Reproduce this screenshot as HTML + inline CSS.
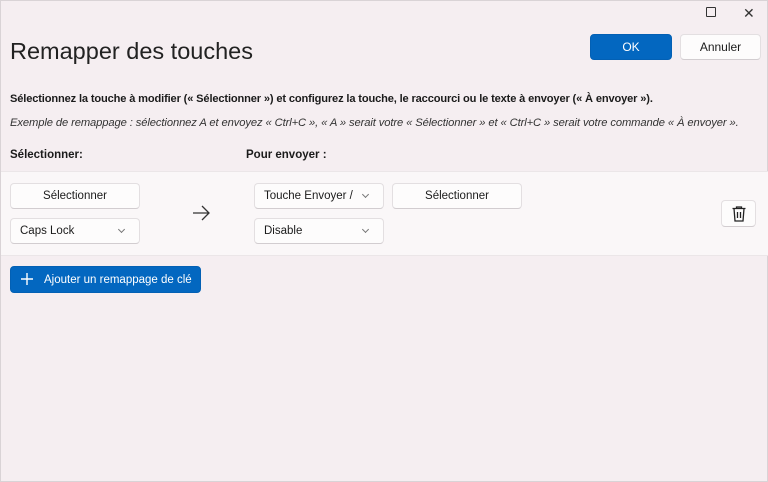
<!DOCTYPE html>
<html><head><meta charset="utf-8"><style>
*{margin:0;padding:0;box-sizing:border-box}
body{width:768px;height:482px;background:#f5eef1;font-family:"Liberation Sans",sans-serif;color:#1b1b1b;position:relative;overflow:hidden;border:1px solid #d9d3d6}
.a{position:absolute;white-space:nowrap}
.btn{position:absolute;background:#fdfcfc;border:1px solid #e3dfe1;border-bottom-color:#d2cdd0;border-radius:4px;font-size:11.5px;display:flex;align-items:center}
.c{justify-content:center}
.dd{padding-left:9px}
.dd:after{content:"";position:absolute;right:15px;top:8px;width:4px;height:4px;border-right:1px solid #777;border-bottom:1px solid #777;transform:rotate(45deg)}
</style></head><body>
<div class="a" style="left:705px;top:6px;width:10px;height:10px;border:1.3px solid #333;border-radius:1px"></div>
<div class="a" style="left:742px;top:4px;font-size:14px;color:#333">✕</div>
<div class="a" style="left:9px;top:37px;font-size:23.5px;color:#222">Remapper des touches</div>
<div class="btn c" style="left:589px;top:33px;width:82px;height:26px;background:#0367c0;border-color:#0360b4;color:#fff;font-size:12px">OK</div>
<div class="btn c" style="left:679px;top:33px;width:81px;height:26px;font-size:12px">Annuler</div>
<div class="a" style="left:9px;top:92px;font-size:11.1px;font-weight:bold;letter-spacing:-0.15px">Sélectionnez la touche à modifier (« Sélectionner ») et configurez la touche, le raccourci ou le texte à envoyer (« À envoyer »).</div>
<div class="a" style="left:9px;top:116px;font-size:11.2px;font-style:italic;color:#333;letter-spacing:-0.1px">Exemple de remappage : sélectionnez A et envoyez « Ctrl+C », « A » serait votre « Sélectionner » et « Ctrl+C » serait votre commande « À envoyer ».</div>
<div class="a" style="left:9px;top:148px;font-size:11.5px;font-weight:bold">Sélectionner:</div>
<div class="a" style="left:245px;top:148px;font-size:11.5px;font-weight:bold">Pour envoyer :</div>
<div class="a" style="left:0;top:170px;width:768px;height:85px;background:#faf7f8;border-top:1px solid #ebe6e8;border-bottom:1px solid #ebe6e8"></div>
<div class="btn c" style="left:9px;top:182px;width:130px;height:26px">Sélectionner</div>
<div class="btn dd" style="left:9px;top:217px;width:130px;height:26px">Caps Lock</div>
<svg class="a" style="left:190px;top:204px" width="20" height="16" viewBox="0 0 20 16"><path d="M2 8H18M11 1L18 8L11 15" fill="none" stroke="#333" stroke-width="1.3"/></svg>
<div class="btn dd" style="left:253px;top:182px;width:130px;height:26px">Touche Envoyer /</div>
<div class="btn c" style="left:391px;top:182px;width:130px;height:26px">Sélectionner</div>
<div class="btn dd" style="left:253px;top:217px;width:130px;height:26px">Disable</div>
<div class="btn c" style="left:720px;top:199px;width:35px;height:27px">
<svg width="16" height="18" viewBox="0 0 16 18"><path d="M1.5 3.5H14.5M5.5 3.5V2H10.5V3.5M3 3.5L4 16H12L13 3.5M6.5 7V13M9.5 7V13" fill="none" stroke="#222" stroke-width="1.3"/></svg></div>
<div class="btn" style="left:9px;top:265px;width:191px;height:27px;background:#0367c0;border-color:#0360b4;color:#fff;font-size:11.5px;padding-left:33px">Ajouter un remappage de clé</div>
<svg class="a" style="left:19px;top:271px" width="14" height="14" viewBox="0 0 14 14"><path d="M7 1V13M1 7H13" stroke="#fff" stroke-width="1.4"/></svg>
</body></html>
